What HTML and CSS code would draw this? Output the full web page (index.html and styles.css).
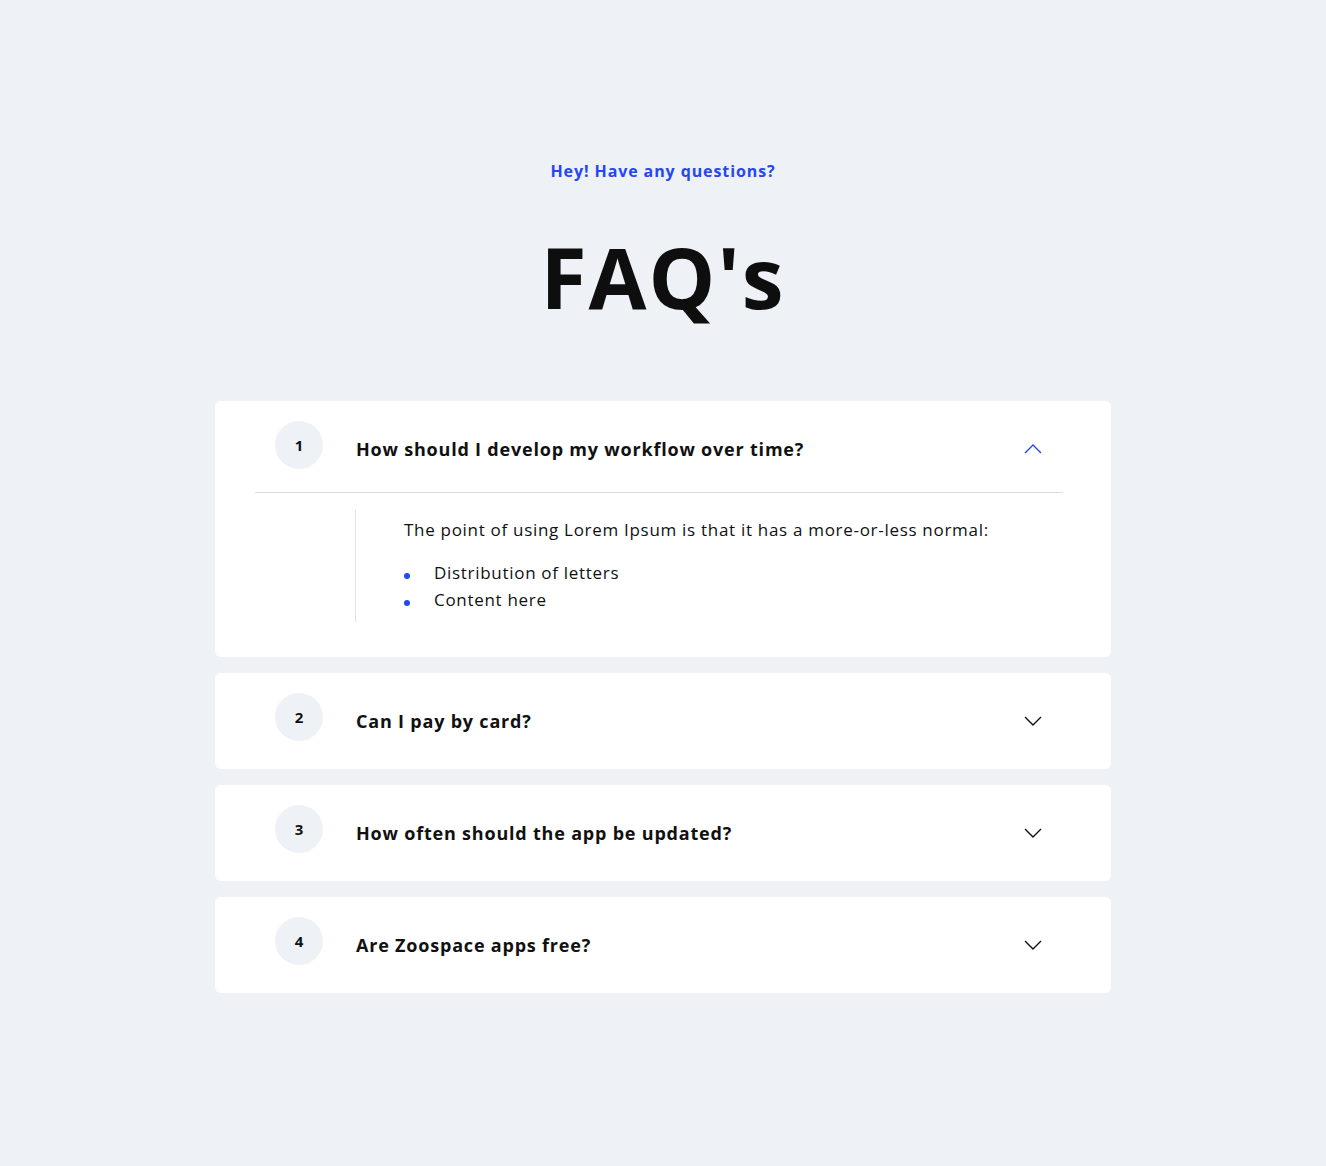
FILE: index.html
```html
<!DOCTYPE html>
<html lang="en">
<head>
  <meta charset="UTF-8" />
  <meta name="viewport" content="width=device-width, initial-scale=1.0" />
  <title>FAQ's</title>
  <link rel="stylesheet" href="styles.css">
</head>
<body>
  <div class="faq">
    <p class="faq-eyebrow">Hey! Have any questions?</p>
    <h1 class="faq-title">FAQ's</h1>

    <div class="faq-list">
      <div class="faq-item open">
        <div class="faq-head">
          <span class="faq-num">1</span>
          <span class="faq-question">How should I develop my workflow over time?</span>
          <svg class="faq-chevron" viewBox="0 0 24 24" width="24" height="24"><path d="M4 16 L12 8 L20 16" fill="none" stroke="currentColor" stroke-width="1.4"/></svg>
        </div>
        <div class="faq-body">
          <div class="faq-answer">
            <p>The point of using Lorem Ipsum is that it has a more-or-less normal:</p>
            <ul>
              <li>Distribution of letters</li>
              <li>Content here</li>
            </ul>
          </div>
        </div>
      </div>

      <div class="faq-item">
        <div class="faq-head">
          <span class="faq-num">2</span>
          <span class="faq-question">Can I pay by card?</span>
          <svg class="faq-chevron" viewBox="0 0 24 24" width="24" height="24"><path d="M4 8 L12 16 L20 8" fill="none" stroke="currentColor" stroke-width="1.4"/></svg>
        </div>
      </div>

      <div class="faq-item">
        <div class="faq-head">
          <span class="faq-num">3</span>
          <span class="faq-question">How often should the app be updated?</span>
          <svg class="faq-chevron" viewBox="0 0 24 24" width="24" height="24"><path d="M4 8 L12 16 L20 8" fill="none" stroke="currentColor" stroke-width="1.4"/></svg>
        </div>
      </div>

      <div class="faq-item">
        <div class="faq-head">
          <span class="faq-num">4</span>
          <span class="faq-question">Are Zoospace apps free?</span>
          <svg class="faq-chevron" viewBox="0 0 24 24" width="24" height="24"><path d="M4 8 L12 16 L20 8" fill="none" stroke="currentColor" stroke-width="1.4"/></svg>
        </div>
      </div>
    </div>
  </div>
</body>
</html>
```

FILE: styles.css
```css
body {
  font-family: "Open Sans", Lato, sans-serif;
  background: #eef2f7;
  color: #111;
  margin: 0;
}

.faq {
  width: 896px;
  margin: 0 auto;
  padding-top: 159px;
  padding-bottom: 172px;
}

.faq-eyebrow {
  margin: 0;
  text-align: center;
  color: #2447f2;
  font-size: 16px;
  font-weight: bold;
  letter-spacing: 0.9px;
  line-height: 24px;
}

.faq-title {
  margin: 44px 0 0;
  text-align: center;
  font-size: 84px;
  font-weight: 700;
  letter-spacing: 2px;
  line-height: 100px;
  color: #0e0e0e;
}

.faq-list {
  margin-top: 74px;
  display: flex;
  flex-direction: column;
  gap: 16px;
}

.faq-item {
  background: white;
  border-radius: 6px;
  padding: 0 48px 0 40px;
}

.faq-head {
  display: flex;
  align-items: flex-start;
  height: 96px;
  padding: 20px 18px 0 20px;
  box-sizing: border-box;
}

.open .faq-head {
  height: 92px;
  border-bottom: 1px solid #dcdcdc;
}

.faq-num {
  width: 48px;
  height: 48px;
  border-radius: 50%;
  background: #eef2f7;
  display: flex;
  align-items: center;
  justify-content: center;
  font-size: 15px;
  font-weight: bold;
  flex-shrink: 0;
}

.faq-question {
  flex: 1;
  margin-left: 33px;
  margin-top: 16px;
  font-size: 18px;
  font-weight: bold;
  letter-spacing: 0.8px;
  line-height: 24px;
}

.faq-chevron {
  margin-top: 16px;
  color: #111;
}

.open .faq-chevron {
  color: #2447f2;
}

.faq-body {
  padding: 17px 0 35px 100px;
}

.faq-answer {
  border-left: 1px solid #e2e2e2;
  padding: 7px 0 9px 48px;
  font-size: 17px;
  letter-spacing: 0.7px;
}

.faq-answer p {
  margin: 0 0 16px;
  line-height: 26px;
}

.faq-answer ul {
  margin: 0;
  padding: 0;
  list-style: none;
}

.faq-answer li {
  position: relative;
  padding-left: 30px;
  line-height: 27px;
}

.faq-answer li::before {
  content: "";
  position: absolute;
  left: 0;
  top: 14px;
  width: 6px;
  height: 6px;
  border-radius: 50%;
  background: #2447f2;
}
```
